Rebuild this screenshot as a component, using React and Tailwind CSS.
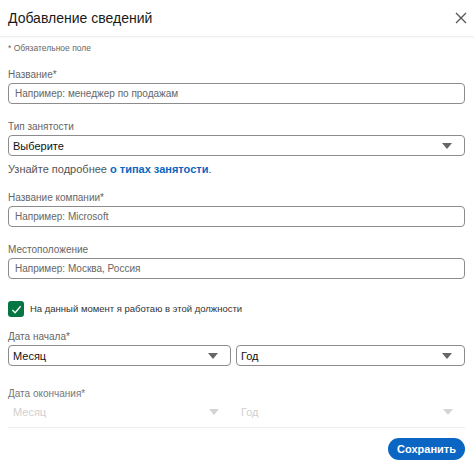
import React from 'react';

const Caret = ({ light }) => (
  <svg className="w-[10px] h-[6px]" viewBox="0 0 10 6">
    <path d="M0 0h10L5 6z" fill={light ? '#d4d4d4' : '#666'} />
  </svg>
);

const Label = ({ children, className = '' }) => (
  <label className={`block text-[10px] leading-[14px] text-[#666] ${className}`}>{children}</label>
);

const Input = ({ placeholder }) => (
  <div className="h-[21px] rounded-[4px] border border-[#8c8c8c] flex items-center px-[6px] text-[10px] leading-[14px] text-[#666]">
    {placeholder}
  </div>
);

const Select = ({ value, light, className = '' }) => (
  <div
    className={`rounded-[4px] flex items-center justify-between pl-[4px] pr-[12px] text-[11px] leading-[14px] ${
      light ? 'h-[16px] text-[#d0d0d0] pl-[5px]' : 'h-[21px] border border-[#8c8c8c] text-[#111]'
    } ${className}`}
  >
    <span>{value}</span>
    <Caret light={light} />
  </div>
);

export default function App() {
  return (
    <div className="w-[474px] h-[467px] bg-white overflow-hidden" style={{ fontFamily: '"Liberation Sans", Arial, sans-serif' }}>
      {/* header */}
      <div className="flex items-center justify-between h-[37px] pl-[8px] pr-[6px] border-b border-[#f0f0f0] shadow-[0_1px_2px_rgba(0,0,0,0.04)]">
        <h1 className="text-[14px] leading-[20px] text-[#1a1a1a] font-normal">Добавление сведений</h1>
        <svg className="w-[14px] h-[14px]" viewBox="0 0 14 14" fill="none" stroke="#555" strokeWidth="1.3">
          <path d="M2 2l10 10M12 2L2 12" />
        </svg>
      </div>

      <div className="pl-[8px] pr-[9px]">
        <div className="mt-[5px] text-[8.5px] leading-[12px] text-[#666]">* Обязательное поле</div>

        <Label className="mt-[14px] mb-[1px]">Название*</Label>
        <Input placeholder="Например: менеджер по продажам" />

        <Label className="mt-[16px] mb-[1px]">Тип занятости</Label>
        <Select value="Выберите" />

        <div className="mt-[5px] text-[11px] leading-[16px] text-[#555]">
          Узнайте подробнее <span className="text-[#0a66c2] font-bold">о типах занятости</span>.
        </div>

        <Label className="mt-[14px] mb-[1px]">Название компании*</Label>
        <Input placeholder="Например: Microsoft" />

        <Label className="mt-[16px] mb-[1px]">Местоположение</Label>
        <Input placeholder="Например: Москва, Россия" />

        <div className="mt-[22px] flex items-center gap-[6px]">
          <div className="w-[16px] h-[16px] rounded-[3px] bg-[#057642] flex items-center justify-center">
            <svg className="w-[11px] h-[11px]" viewBox="0 0 12 12" fill="none" stroke="white" strokeWidth="1.4">
              <path d="M1.5 6.5l3 3 6-7" />
            </svg>
          </div>
          <span className="text-[9.5px] leading-[14px] text-[#333]">На данный момент я работаю в этой должности</span>
        </div>

        <Label className="mt-[13px] mb-[1px]">Дата начала*</Label>
        <div className="flex gap-[5px]">
          <Select value="Месяц" className="w-[223px]" />
          <Select value="Год" className="flex-1" />
        </div>

        <Label className="mt-[21px] mb-[3px] text-[#777]">Дата окончания*</Label>
        <div className="flex gap-[5px]">
          <Select value="Месяц" light className="w-[223px]" />
          <Select value="Год" light className="flex-1" />
        </div>

        <div className="mt-[7px] border-t border-[#ececec]" />
        <div className="flex justify-end mt-[10px]">
          <button className="h-[22px] w-[77px] rounded-full bg-[#0a66c2] text-white text-[11px] leading-[14px] font-bold">Сохранить</button>
        </div>
      </div>
    </div>
  );
}
